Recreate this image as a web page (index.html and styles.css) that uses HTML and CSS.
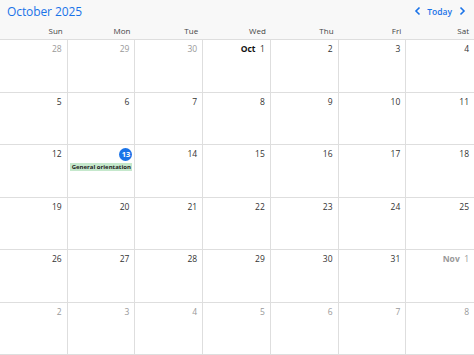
FILE: index.html
```html
<!DOCTYPE html>
<html>
<head>
<meta charset="utf-8">
<link rel="stylesheet" href="styles.css">
</head>
<body>
<div class="cal">
  <div class="top">
    <div class="title">October 2025</div>
    <div class="nav">
      <svg class="chev" width="8" height="10" viewBox="0 0 8 10"><path d="M5.5 1.5 L2 5 L5.5 8.5" fill="none" stroke="#1a73e8" stroke-width="1.6"/></svg>
      <span class="today">Today</span>
      <svg class="chev" width="8" height="10" viewBox="0 0 8 10"><path d="M2.5 1.5 L6 5 L2.5 8.5" fill="none" stroke="#1a73e8" stroke-width="1.6"/></svg>
    </div>
  </div>
  <div class="dows">
    <div class="dow">Sun</div><div class="dow">Mon</div><div class="dow">Tue</div><div class="dow">Wed</div><div class="dow">Thu</div><div class="dow">Fri</div><div class="dow">Sat</div>
  </div>
  <div class="grid">
    <div class="cell"><span class="num other">28</span></div>
    <div class="cell"><span class="num other">29</span></div>
    <div class="cell"><span class="num other">30</span></div>
    <div class="cell"><span class="num"><b>Oct</b>&nbsp; 1</span></div>
    <div class="cell"><span class="num">2</span></div>
    <div class="cell"><span class="num">3</span></div>
    <div class="cell"><span class="num">4</span></div>

    <div class="cell"><span class="num">5</span></div>
    <div class="cell"><span class="num">6</span></div>
    <div class="cell"><span class="num">7</span></div>
    <div class="cell"><span class="num">8</span></div>
    <div class="cell"><span class="num">9</span></div>
    <div class="cell"><span class="num">10</span></div>
    <div class="cell"><span class="num">11</span></div>

    <div class="cell"><span class="num">12</span></div>
    <div class="cell"><span class="num todaynum">13</span><div class="event">General orientation</div></div>
    <div class="cell"><span class="num">14</span></div>
    <div class="cell"><span class="num">15</span></div>
    <div class="cell"><span class="num">16</span></div>
    <div class="cell"><span class="num">17</span></div>
    <div class="cell"><span class="num">18</span></div>

    <div class="cell"><span class="num">19</span></div>
    <div class="cell"><span class="num">20</span></div>
    <div class="cell"><span class="num">21</span></div>
    <div class="cell"><span class="num">22</span></div>
    <div class="cell"><span class="num">23</span></div>
    <div class="cell"><span class="num">24</span></div>
    <div class="cell"><span class="num">25</span></div>

    <div class="cell"><span class="num">26</span></div>
    <div class="cell"><span class="num">27</span></div>
    <div class="cell"><span class="num">28</span></div>
    <div class="cell"><span class="num">29</span></div>
    <div class="cell"><span class="num">30</span></div>
    <div class="cell"><span class="num">31</span></div>
    <div class="cell"><span class="num other"><b>Nov</b>&nbsp; 1</span></div>

    <div class="cell"><span class="num other">2</span></div>
    <div class="cell"><span class="num other">3</span></div>
    <div class="cell"><span class="num other">4</span></div>
    <div class="cell"><span class="num other">5</span></div>
    <div class="cell"><span class="num other">6</span></div>
    <div class="cell"><span class="num other">7</span></div>
    <div class="cell"><span class="num other">8</span></div>
  </div>
</div>
</body>
</html>
```

FILE: styles.css
```css
* { box-sizing: border-box; }
html, body { margin: 0; padding: 0; background: #fff; }
body { font-family: "Open Sans", "Noto Sans", sans-serif; color: #333; }
.cal { width: 474px; height: 355px; display: flex; flex-direction: column; overflow: hidden; }
.top { height: 22px; display: flex; align-items: center; justify-content: space-between; padding: 0 8px 0 7px; background: #f8f8f8; }
.title { font-size: 12px; letter-spacing: -0.1px; color: #1a73e8; line-height: 22px; padding-top: 1px; }
.nav { display: flex; align-items: center; gap: 5px; }
.today { font-size: 8.5px; font-weight: 600; color: #1a73e8; padding-right: 1px; }
.chev { display: block; }
.dows { height: 18px; display: grid; grid-template-columns: repeat(7, 1fr); background: #f8f8f8; border-bottom: 1px solid #dedede; }
.dow { font-size: 8px; color: #444; text-align: right; padding-right: 5px; line-height: 17px; }
.grid { flex: 1; display: grid; grid-template-columns: repeat(7, 1fr); grid-template-rows: repeat(6, 1fr); }
.cell { border-right: 1px solid #dedede; border-bottom: 1px solid #dedede; display: flex; flex-direction: column; align-items: flex-end; padding: 3px 5px 0 2px; }
.cell:nth-child(7n) { border-right: none; }
.num { font-size: 8.5px; line-height: 12px; color: #333; }
.num b { font-weight: 700; color: #111; }
.num.other { color: #999; }
.num.other b { color: #999; }
.todaynum { background: #1a73e8; color: #fff; border-radius: 50%; width: 13px; height: 13px; text-align: center; line-height: 13px; font-weight: 700; font-size: 7.5px; margin-top: -0.5px; margin-right: -3px; }
.event { align-self: stretch; margin-top: 2px; margin-right: -3px; background: #c5e8cc; color: #222; font-size: 6px; font-weight: 700; line-height: 8px; padding-left: 2px; white-space: nowrap; overflow: hidden; }
```
